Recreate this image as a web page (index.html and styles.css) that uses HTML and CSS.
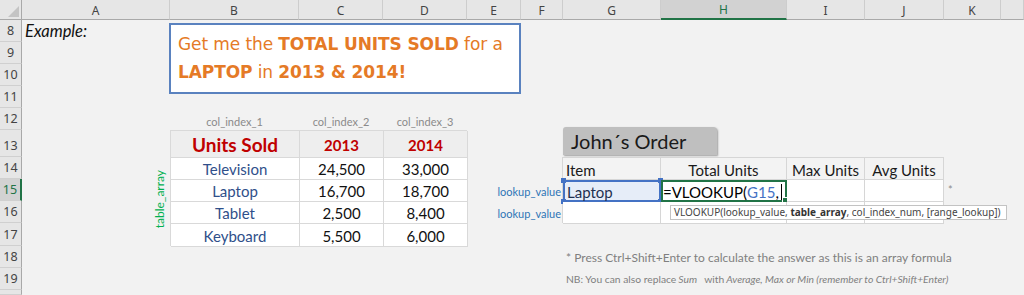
FILE: index.html
```html
<!DOCTYPE html>
<html>
<head>
<meta charset="utf-8">
<link rel="stylesheet" href="styles.css">
</head>
<body>
<div class="sheet">
  <div class="corner"><span class="tri"></span></div>
  <div class="colhdr">A</div>
  <div class="colhdr">B</div>
  <div class="colhdr">C</div>
  <div class="colhdr">D</div>
  <div class="colhdr">E</div>
  <div class="colhdr">F</div>
  <div class="colhdr">G</div>
  <div class="colhdr active">H</div>
  <div class="colhdr">I</div>
  <div class="colhdr">J</div>
  <div class="colhdr">K</div>
  <div class="colhdr"></div>

  <div class="rowhdr">8</div>
  <div class="rowhdr">9</div>
  <div class="rowhdr">10</div>
  <div class="rowhdr">11</div>
  <div class="rowhdr">12</div>
  <div class="rowhdr">13</div>
  <div class="rowhdr">14</div>
  <div class="rowhdr active">15</div>
  <div class="rowhdr">16</div>
  <div class="rowhdr">17</div>
  <div class="rowhdr">18</div>
  <div class="rowhdr">19</div>
  <div class="rowhdr"></div>

  <div class="example">Example:</div>

  <div class="callout">
    <div>Get me the <b>TOTAL UNITS SOLD</b> for a</div>
    <div><b>LAPTOP</b> in <b>2013 &amp; 2014!</b></div>
  </div>

  <div class="colidx">
    <span>col_index_1</span>
    <span>col_index_2</span>
    <span>col_index_3</span>
  </div>

  <div class="array-label">table_array</div>

  <div class="data">
    <div class="th name">Units Sold</div>
    <div class="th">2013</div>
    <div class="th">2014</div>
    <div class="td item">Television</div>
    <div class="td">24,500</div>
    <div class="td">33,000</div>
    <div class="td item">Laptop</div>
    <div class="td">16,700</div>
    <div class="td">18,700</div>
    <div class="td item">Tablet</div>
    <div class="td">2,500</div>
    <div class="td">8,400</div>
    <div class="td item">Keyboard</div>
    <div class="td">5,500</div>
    <div class="td">6,000</div>
  </div>

  <div class="lookup r15">lookup_value</div>
  <div class="lookup r16">lookup_value</div>

  <div class="john">John´s Order</div>

  <div class="order">
    <div class="oh left">Item</div>
    <div class="oh">Total Units</div>
    <div class="oh">Max Units</div>
    <div class="oh">Avg Units</div>
    <div class="oc left ref">Laptop
      <span class="hdl tl"></span><span class="hdl tr"></span><span class="hdl bl"></span><span class="hdl br"></span>
    </div>
    <div class="oc left editing">=VLOOKUP(<span class="refword">G15</span>,<span class="caret"></span>
      <span class="fill"></span>
      <div class="tip">VLOOKUP(lookup_value, <b>table_array</b>, col_index_num, [range_lookup])</div>
    </div>
    <div class="oc"></div>
    <div class="oc"></div>
    <div class="oc"></div>
    <div class="oc"></div>
    <div class="oc"></div>
    <div class="oc"></div>
  </div>

  <div class="star">*</div>

  <div class="note">* Press Ctrl+Shift+Enter to calculate the answer as this is an array formula</div>
  <div class="note small">NB: You can also replace <i>Sum</i>&nbsp; with <i>Average, Max or Min (remember to Ctrl+Shift+Enter)</i></div>
</div>
</body>
</html>
```

FILE: styles.css
```css
html, body {
  margin: 0;
  padding: 0;
  background: #f2f2f2;
}

.sheet {
  display: grid;
  grid-template-columns: 22px 148px 129px 84px 84px 54px 42px 98px 126px 78px 79px 57px 1fr;
  grid-template-rows: 20px 22px 22px 22px 22px 22px 27px 22px 22px 22px 23px 22px 22px 1fr;
  width: 1024px;
  height: 295px;
  overflow: hidden;
  background: #f2f2f2;
  font-family: Lato, "Liberation Sans", sans-serif;
  color: #000;
}

/* headers */
.corner {
  background: #e6e6e6;
  border-right: 1px solid #a9a9a9;
  border-bottom: 1px solid #a9a9a9;
  position: relative;
}
.tri {
  position: absolute;
  right: 2px;
  bottom: 2px;
  width: 0;
  height: 0;
  border-left: 11px solid transparent;
  border-bottom: 11px solid #c4c4c4;
}
.colhdr {
  background: #e6e6e6;
  border-right: 1px solid #cdcdcd;
  border-bottom: 1px solid #a9a9a9;
  font-family: "Noto Sans", "Open Sans", sans-serif;
  font-size: 12px;
  color: #444;
  display: flex;
  align-items: center;
  justify-content: center;
  padding-top: 1px;
  box-sizing: border-box;
}
.colhdr.active {
  background: #d2d2d2;
  color: #217346;
  border-bottom: 2px solid #217346;
}
.rowhdr {
  grid-column: 1;
  background: #e6e6e6;
  border-right: 1px solid #a9a9a9;
  border-bottom: 1px solid #d0d0d0;
  font-family: "Noto Sans", "Open Sans", sans-serif;
  font-size: 12.5px;
  color: #444;
  display: flex;
  align-items: flex-end;
  justify-content: center;
  padding-bottom: 2px;
  box-sizing: border-box;
}
.rowhdr.active {
  background: #d2d2d2;
  color: #217346;
  border-right: 2px solid #217346;
}

/* left block */
.example {
  grid-column: 2;
  grid-row: 2;
  font-style: italic;
  font-size: 16.5px;
  padding-left: 3px;
  display: flex;
  align-items: center;
  color: #111;
}

.callout {
  grid-column: 3 / 7;
  grid-row: 2 / 6;
  align-self: start;
  margin-top: 3px;
  margin-left: -1px;
  height: 71px;
  box-sizing: border-box;
  background: #fff;
  border: 2px solid #5a82bf;
  padding: 5px 0 0 7px;
  font-family: "DejaVu Sans", sans-serif;
  font-size: 17px;
  line-height: 28px;
  color: #e57a26;
  letter-spacing: -0.1px;
}
.callout b {
  font-weight: 600;
}

.colidx {
  grid-column: 3 / 6;
  grid-row: 6;
  display: grid;
  grid-template-columns: 129px 84px 84px;
  font-size: 11px;
  color: #8a8a8a;
}
.colidx span {
  display: flex;
  align-items: center;
  justify-content: center;
  padding-top: 4px;
}

.array-label {
  grid-column: 2;
  grid-row: 8 / 12;
  justify-self: end;
  align-self: center;
  margin-right: 3px;
  margin-top: -4px;
  writing-mode: vertical-rl;
  transform: rotate(180deg);
  font-size: 12px;
  color: #00b050;
}

.data {
  grid-column: 3 / 6;
  grid-row: 7 / 12;
  display: grid;
  grid-template-columns: 129px 84px 84px;
  grid-template-rows: 27px 22px 22px 22px 23px;
  border-top: 1px solid #d9d9d9;
  border-left: 1px solid #d9d9d9;
  box-sizing: border-box;
}
.data > div {
  border-right: 1px solid #d9d9d9;
  border-bottom: 1px solid #d9d9d9;
  display: flex;
  align-items: center;
  justify-content: center;
}
.th {
  background: #eeeeee;
  color: #c00000;
  font-weight: bold;
  font-size: 15px;
  padding-top: 2px;
}
.th.name {
  font-size: 19px;
  padding-top: 0;
}
.td {
  background: #fff;
  font-size: 15px;
  color: #111;
  padding-top: 1px;
}
.td.item {
  color: #2f4f8a;
}

.lookup {
  grid-column: 6 / 8;
  justify-self: end;
  font-size: 11px;
  color: #2e75b6;
  display: flex;
  align-items: center;
  padding-right: 2px;
  padding-top: 2px;
}
.lookup.r15 { grid-row: 9; }
.lookup.r16 { grid-row: 10; }

.john {
  grid-column: 8 / 10;
  grid-row: 7;
  justify-self: start;
  align-self: start;
  margin-top: -3px;
  width: 154px;
  height: 28px;
  box-sizing: border-box;
  background: #bfbfbf;
  border-radius: 3px 4px 0 0;
  box-shadow: 1px 1px 2px rgba(0, 0, 0, 0.35);
  font-size: 20px;
  color: #1a1a1a;
  padding-left: 8px;
  display: flex;
  align-items: center;
}

.order {
  grid-column: 8 / 12;
  grid-row: 8 / 11;
  display: grid;
  grid-template-columns: 98px 126px 78px 79px;
  grid-template-rows: 22px 22px 22px;
  border-top: 1px solid #d6d6d6;
  border-left: 1px solid #d6d6d6;
  box-sizing: border-box;
  margin-left: -1px;
}
.order > div {
  border-right: 1px solid #d6d6d6;
  border-bottom: 1px solid #d6d6d6;
  display: flex;
  align-items: center;
  justify-content: center;
  font-size: 15px;
  color: #1a1a1a;
  padding-top: 2px;
  box-sizing: border-box;
  position: relative;
}
.order .oh {
  background: #f3f3f3;
}
.order .oc {
  background: #fff;
}
.order .left {
  justify-content: flex-start;
  padding-left: 3px;
}
.order .ref {
  background: #e6edf8;
  border: 2px solid #4472c4;
  color: #1f3050;
  padding-left: 2px;
}
.hdl {
  position: absolute;
  width: 5px;
  height: 5px;
  background: #4472c4;
}
.hdl.tl { left: -4px; top: -4px; }
.hdl.tr { right: -4px; top: -4px; }
.hdl.bl { left: -4px; bottom: -4px; }
.hdl.br { right: -4px; bottom: -4px; }

.order .editing {
  border: 2px solid #217346;
  padding-left: 0;
  color: #000;
  overflow: visible;
}
.refword {
  color: #4472c4;
}
.caret {
  display: inline-block;
  width: 1px;
  height: 16px;
  background: #000;
  margin-left: 2px;
}
.fill {
  position: absolute;
  right: -4px;
  bottom: -4px;
  width: 5px;
  height: 5px;
  background: #217346;
  border: 1px solid #fff;
}
.tip {
  position: absolute;
  left: 7px;
  top: 23px;
  width: 337px;
  height: 15px;
  box-sizing: border-box;
  background: #fff;
  border: 1px solid #c3c3c3;
  font-family: "Noto Sans", "Open Sans", sans-serif;
  font-size: 10px;
  line-height: 13px;
  color: #444;
  padding-left: 3px;
  white-space: nowrap;
  z-index: 2;
}
.tip b {
  font-weight: bold;
  color: #333;
}

.star {
  grid-column: 12;
  grid-row: 9;
  font-size: 11px;
  color: #8c8c8c;
  padding-left: 4px;
  padding-top: 4px;
}

.note {
  grid-column: 8 / 14;
  font-size: 12px;
  color: #808080;
  padding-left: 3px;
  display: flex;
  align-items: center;
  white-space: nowrap;
  grid-row: 12;
}
.note.small {
  grid-row: 13;
  font-size: 10.3px;
}
.note i {
  margin: 0 0.2em;
}
```
